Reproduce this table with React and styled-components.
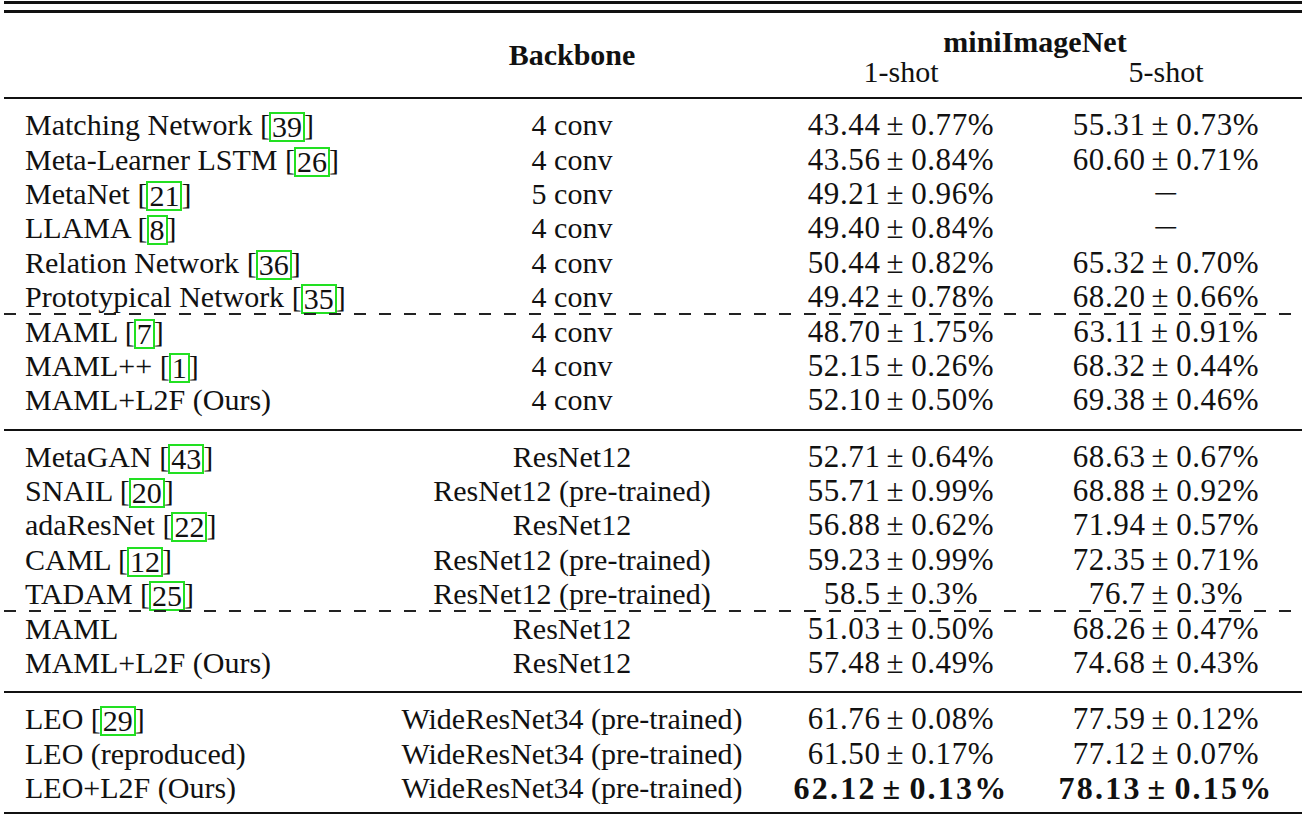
import React from 'react';
import styled, { createGlobalStyle } from 'styled-components';

const GlobalStyle = createGlobalStyle`
  html, body {
    margin: 0;
    padding: 0;
    background: #fff;
  }
  body {
    font-family: "Liberation Serif", "Times New Roman", serif;
    color: #111;
  }
`;

const COLS = '388px 360px 298px 232px 20px';

const groups = [
  {
    rows: [
      ['Matching Network', '39', '4 conv', '43.44 ± 0.77%', '55.31 ± 0.73%'],
      ['Meta-Learner LSTM', '26', '4 conv', '43.56 ± 0.84%', '60.60 ± 0.71%'],
      ['MetaNet', '21', '5 conv', '49.21 ± 0.96%', null],
      ['LLAMA', '8', '4 conv', '49.40 ± 0.84%', null],
      ['Relation Network', '36', '4 conv', '50.44 ± 0.82%', '65.32 ± 0.70%'],
      ['Prototypical Network', '35', '4 conv', '49.42 ± 0.78%', '68.20 ± 0.66%'],
    ],
    extra: [
      ['MAML', '7', '4 conv', '48.70 ± 1.75%', '63.11 ± 0.91%'],
      ['MAML++', '1', '4 conv', '52.15 ± 0.26%', '68.32 ± 0.44%'],
      ['MAML+L2F (Ours)', null, '4 conv', '52.10 ± 0.50%', '69.38 ± 0.46%'],
    ],
  },
  {
    rows: [
      ['MetaGAN', '43', 'ResNet12', '52.71 ± 0.64%', '68.63 ± 0.67%'],
      ['SNAIL', '20', 'ResNet12 (pre-trained)', '55.71 ± 0.99%', '68.88 ± 0.92%'],
      ['adaResNet', '22', 'ResNet12', '56.88 ± 0.62%', '71.94 ± 0.57%'],
      ['CAML', '12', 'ResNet12 (pre-trained)', '59.23 ± 0.99%', '72.35 ± 0.71%'],
      ['TADAM', '25', 'ResNet12 (pre-trained)', '58.5 ± 0.3%', '76.7 ± 0.3%'],
    ],
    extra: [
      ['MAML', null, 'ResNet12', '51.03 ± 0.50%', '68.26 ± 0.47%'],
      ['MAML+L2F (Ours)', null, 'ResNet12', '57.48 ± 0.49%', '74.68 ± 0.43%'],
    ],
  },
  {
    rows: [
      ['LEO', '29', 'WideResNet34 (pre-trained)', '61.76 ± 0.08%', '77.59 ± 0.12%'],
      ['LEO (reproduced)', null, 'WideResNet34 (pre-trained)', '61.50 ± 0.17%', '77.12 ± 0.07%'],
      ['LEO+L2F (Ours)', null, 'WideResNet34 (pre-trained)', '62.12 ± 0.13%', '78.13 ± 0.15%', true],
    ],
  },
];

const Value = ({ text, bold }) => {
  if (!text) return <Num><Minus>−</Minus></Num>;
  const [a, b] = text.split(' ± ');
  return (
    <Num $bold={bold}>
      {a}
      <Pm>±</Pm>
      {b}
    </Num>
  );
};

const TableRow = ({ row }) => {
  const [name, cite, backbone, one, five, best] = row;
  return (
    <Row>
      <Name>
        {name}
        {cite && (
          <>
            {' ['}
            <Cite>{cite}</Cite>
            {']'}
          </>
        )}
      </Name>
      <Cell>{backbone}</Cell>
      <Value text={one} bold={best} />
      <Value text={five} bold={best} />
    </Row>
  );
};

export default function App() {
  return (
    <Page>
      <GlobalStyle />
      <Rule $h={3} $top={1} />
      <Rule $h={3} $top={6} />
      <Header>
        <HeadBackbone>Backbone</HeadBackbone>
        <HeadDataset>miniImageNet</HeadDataset>
        <HeadShot $col={3}>1-shot</HeadShot>
        <HeadShot $col={4}>5-shot</HeadShot>
      </Header>
      <Rule $h={2} $top={0} />
      {groups.map((g, gi) => (
        <Group key={gi} $last={gi === groups.length - 1}>
          {g.rows.map((r, i) => (
            <TableRow key={i} row={r} />
          ))}
          {g.extra && <DashRule />}
          {g.extra &&
            g.extra.map((r, i) => <TableRow key={'e' + i} row={r} />)}
        </Group>
      ))}
      <Rule $h={3} $top={7} />
    </Page>
  );
}

const Page = styled.div`
  width: 1298px;
  margin-left: 4px;
  display: flex;
  flex-direction: column;
`;

const Rule = styled.div`
  height: ${p => p.$h}px;
  margin-top: ${p => p.$top}px;
  background: #111;
`;

const DashRule = styled.div`
  height: 2px;
  margin: -1px 0;
  position: relative;
  z-index: 1;
  background-image: repeating-linear-gradient(
    to right,
    #222 0 12px,
    transparent 12px 25px
  );
`;

const Header = styled.div`
  display: grid;
  grid-template-columns: ${COLS};
  grid-template-rows: 44px 40px;
  font-size: 30px;
  line-height: 30px;
`;

const HeadBackbone = styled.div`
  grid-column: 2;
  grid-row: 1 / span 2;
  align-self: center;
  text-align: center;
  font-weight: bold;
`;

const HeadDataset = styled.div`
  grid-column: 3 / span 3;
  grid-row: 1;
  align-self: end;
  text-align: center;
  padding-left: 16px;
  font-weight: bold;
`;

const HeadShot = styled.div`
  grid-column: ${p => p.$col};
  grid-row: 2;
  align-self: start;
  text-align: center;
`;

const Group = styled.div`
  padding: 9px 0 ${p => (p.$last ? 0 : 11)}px;
  border-bottom: ${p => (p.$last ? 'none' : '2px solid #111')};
`;

const Row = styled.div`
  display: grid;
  grid-template-columns: ${COLS};
  height: 34.4px;
  align-items: center;
  font-size: 30px;
  line-height: 34px;
  white-space: nowrap;
`;

const Name = styled.div`
  padding-left: 21px;
`;

const Cite = styled.span`
  display: inline-block;
  border: 2px solid #22e022;
  line-height: 26px;
  padding: 0 1px;
  margin: 0 -1px;
  vertical-align: -2px;
`;

const Cell = styled.div`
  text-align: center;
`;

const Num = styled.div`
  text-align: center;
  font-size: ${p => (p.$bold ? 32 : 31)}px;
  font-weight: ${p => (p.$bold ? 'bold' : 'normal')};
  letter-spacing: ${p => (p.$bold ? '2.2px' : '0.6px')};
`;

const Pm = styled.span`
  display: inline-block;
  margin: 0 7px 0 6px;
`;

const Minus = styled.span`
  display: inline-block;
  transform: scaleX(1.45);
`;
